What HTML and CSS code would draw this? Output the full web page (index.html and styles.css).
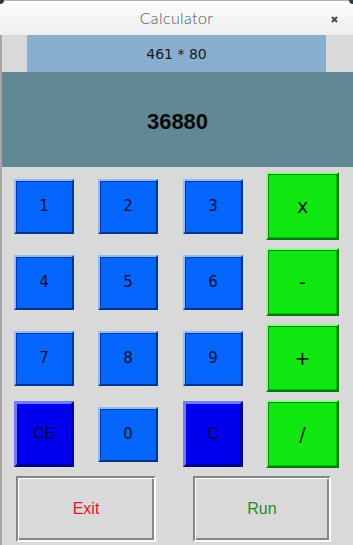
FILE: index.html
```html
<!DOCTYPE html>
<html>
<head>
<meta charset="utf-8">
<title>Calculator</title>
<link rel="stylesheet" href="styles.css">
</head>
<body>
<div class="window">
  <header class="titlebar">
    <span class="corner corner-left"></span>
    <span class="title">Calculator</span>
    <svg class="close" width="7" height="7" viewBox="0 0 7 7"><path d="M1 1L6 6M6 1L1 6" stroke="#4a4a4a" stroke-width="2"/></svg>
    <span class="corner corner-right"></span>
  </header>
  <div class="content">
    <div class="expr-row"><div class="expr">461 * 80</div></div>
    <div class="result">36880</div>
    <div class="keys">
      <button class="key num">1</button>
      <button class="key num">2</button>
      <button class="key num">3</button>
      <button class="key op">x</button>
      <button class="key num">4</button>
      <button class="key num">5</button>
      <button class="key num">6</button>
      <button class="key op">-</button>
      <button class="key num">7</button>
      <button class="key num">8</button>
      <button class="key num">9</button>
      <button class="key op">+</button>
      <button class="key clear">CE</button>
      <button class="key num">0</button>
      <button class="key clear">C</button>
      <button class="key op">/</button>
    </div>
    <div class="actions">
      <button class="action exit">Exit</button>
      <button class="action run">Run</button>
    </div>
  </div>
</div>
</body>
</html>
```
FILE: styles.css
```css
* { box-sizing: border-box; }
html, body {
  margin: 0;
  padding: 0;
  width: 353px;
  height: 545px;
  overflow: hidden;
  background: #d9d9d9;
}
.window {
  width: 353px;
  height: 545px;
  display: flex;
  flex-direction: column;
}
.titlebar {
  position: relative;
  height: 35px;
  flex: none;
  background: linear-gradient(#fdfdfd, #eeeeee);
  border-top: 1px solid #b0b0b0;
  display: flex;
  align-items: center;
  justify-content: center;
}
.corner {
  position: absolute;
  top: -1px;
  width: 4px;
  height: 4px;
  background: #263b44;
}
.corner-left { left: 0; border-bottom-right-radius: 4px; }
.corner-right { right: 0; border-bottom-left-radius: 4px; }
.title {
  font-family: Lato, "Noto Sans", sans-serif;
  font-weight: 300;
  font-size: 16px;
  letter-spacing: 0.4px;
  color: #555555;
  margin-top: -1px;
}
.close {
  position: absolute;
  right: 15px;
  top: 15px;
}
.content {
  flex: 1;
  border-left: 2px solid #a6a6a6;
  display: flex;
  flex-direction: column;
}
.expr-row {
  height: 37px;
  padding-left: 25px;
}
.expr {
  width: 299px;
  height: 37px;
  background: #89afd0;
  display: flex;
  align-items: center;
  justify-content: center;
  font-family: "DejaVu Sans", sans-serif;
  font-size: 14px;
  color: #1a1a1a;
}
.result {
  height: 95px;
  background: #628795;
  display: flex;
  align-items: center;
  justify-content: center;
  font-family: "Liberation Sans", Arial, sans-serif;
  font-weight: bold;
  font-size: 22px;
  color: #0a0a0a;
  padding-top: 4px;
}
.keys {
  display: grid;
  grid-template-columns: 84px 84px 86px 93px;
  grid-template-rows: repeat(4, 76px);
  margin-top: 1px;
  align-items: center;
  justify-items: center;
}
.key {
  margin: 0;
  padding: 0;
  font-family: "DejaVu Sans", sans-serif;
  font-size: 15px;
  color: #0a0f35;
  border-style: solid;
  cursor: pointer;
}
.num {
  width: 60px;
  height: 55px;
  background: #0566ff;
  border-width: 2px;
  border-color: #8fbcff #003596 #003596 #8fbcff;
  box-shadow: inset 1px 1px 0 #0038a8, inset -1px -1px 0 #1a5ad8;
}
.clear {
  width: 60px;
  height: 66px;
  background: #0000ee;
  border-width: 3px;
  border-color: #7878f0 #00008c #00008c #7878f0;
  font-family: "Liberation Sans", Arial, sans-serif;
  font-size: 16px;
  color: #000040;
}
.op {
  width: 73px;
  height: 68px;
  background: #10e610;
  border-width: 2px;
  border-color: #98f498 #067a06 #067a06 #98f498;
  box-shadow: inset 1px 1px 0 #0a8a0a, inset -1px -1px 0 #0cb80c;
  font-size: 19px;
  color: #0a1a0a;
}
.actions {
  display: grid;
  grid-template-columns: 168px 182px;
  align-items: center;
  justify-items: center;
  flex: 1;
}
.action {
  margin: 0;
  padding: 0;
  height: 66px;
  background: #d9d9d9;
  border: 2px solid;
  border-color: #858585 #ffffff #ffffff #858585;
  box-shadow: inset 1px 1px 0 #ffffff, inset -2px -2px 0 #858585;
  font-family: "Liberation Sans", Arial, sans-serif;
  font-size: 16px;
  cursor: pointer;
}
.exit { width: 140px; color: #e8102c; }
.run { width: 138px; color: #2a8a2a; margin-left: 2px; }
```
